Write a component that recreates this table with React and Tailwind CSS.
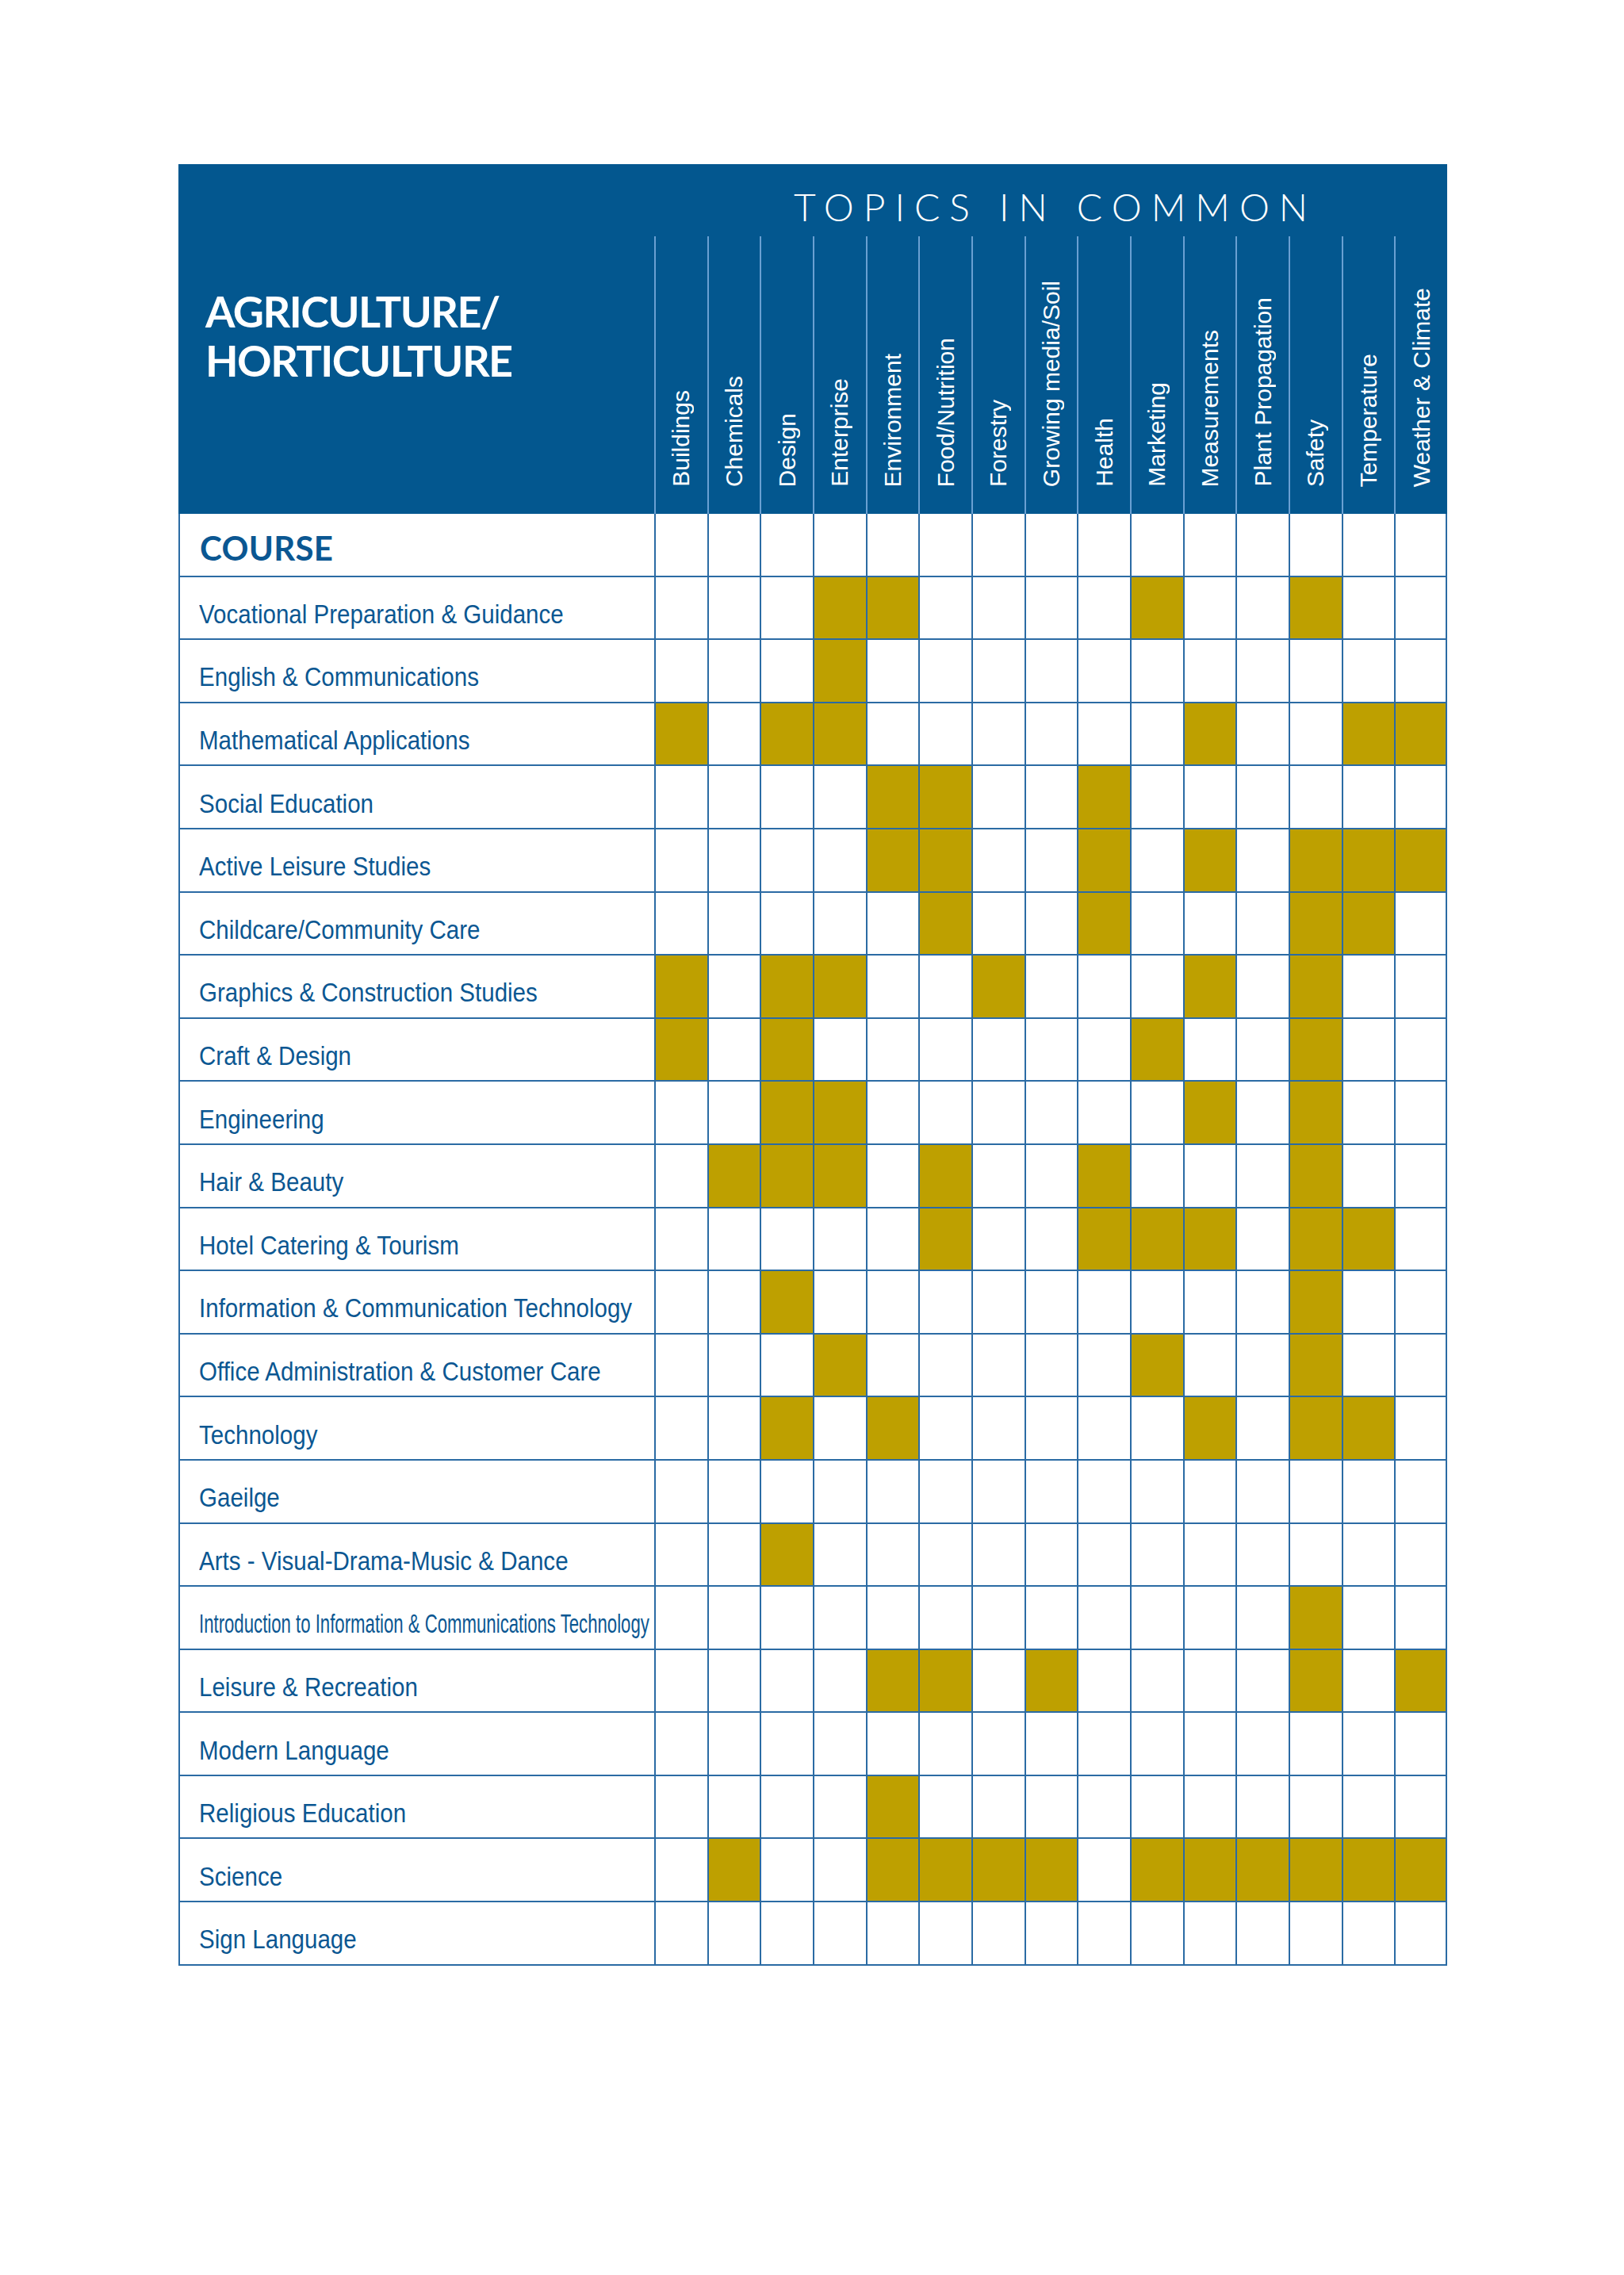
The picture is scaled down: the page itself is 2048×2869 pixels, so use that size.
import React from "react";

const topics = [
  "Buildings",
  "Chemicals",
  "Design",
  "Enterprise",
  "Environment",
  "Food/Nutrition",
  "Forestry",
  "Growing media/Soil",
  "Health",
  "Marketing",
  "Measurements",
  "Plant Propagation",
  "Safety",
  "Temperature",
  "Weather & Climate",
];

const courses = [
  ["Vocational Preparation & Guidance", [3, 4, 9, 12]],
  ["English & Communications", [3]],
  ["Mathematical Applications", [0, 2, 3, 10, 13, 14]],
  ["Social Education", [4, 5, 8]],
  ["Active Leisure Studies", [4, 5, 8, 10, 12, 13, 14]],
  ["Childcare/Community Care", [5, 8, 12, 13]],
  ["Graphics & Construction Studies", [0, 2, 3, 6, 10, 12]],
  ["Craft & Design", [0, 2, 9, 12]],
  ["Engineering", [2, 3, 10, 12]],
  ["Hair & Beauty", [1, 2, 3, 5, 8, 12]],
  ["Hotel Catering & Tourism", [5, 8, 9, 10, 12, 13]],
  ["Information & Communication Technology", [2, 12]],
  ["Office Administration & Customer Care", [3, 9, 12]],
  ["Technology", [2, 4, 10, 12, 13]],
  ["Gaeilge", []],
  ["Arts - Visual-Drama-Music & Dance", [2]],
  ["Introduction to Information & Communications Technology", [12]],
  ["Leisure & Recreation", [4, 5, 7, 12, 14]],
  ["Modern Language", []],
  ["Religious Education", [4]],
  ["Science", [1, 4, 5, 6, 7, 9, 10, 11, 12, 13, 14]],
  ["Sign Language", []],
];

function Cells({ gold }) {
  return topics.map((_, j) => {
    const isGold = gold.includes(j);
    const last = j === topics.length - 1;
    return (
      <div
        key={j}
        className={
          (isGold ? "bg-[#bea000] " : "bg-white ") +
          (last
            ? "w-[66.667px] border-l-2 border-r-2 border-b-2 border-[#2b6ba4]"
            : "w-[66.667px] border-l-2 border-b-2 border-[#2b6ba4]")
        }
      />
    );
  });
}

export default function App() {
  return (
    <div className="w-[2048px] h-[2869px] bg-white font-['Liberation_Sans',Arial,sans-serif]">
      <div className="pt-[207px] pl-[225px]">
        <div className="w-[1600px]">
          {/* Header */}
          <div className="flex h-[441px] bg-[#03578f]">
            <div className="w-[600px] pl-[34px] pt-[155px]">
              <h1 className="font-['Lato',sans-serif] font-bold text-[54px] leading-[62px] text-white tracking-[-1.5px]">
                AGRICULTURE/
                <br />
                HORTICULTURE
              </h1>
            </div>
            <div className="flex w-[1000px] flex-col">
              <div className="h-[91px] pt-[30px] pl-[0.25em] text-center font-['Lato',sans-serif] font-light text-[48px] leading-[48px] tracking-[0.25em] text-white">
                TOPICS IN COMMON
              </div>
              <div className="flex flex-1">
                {topics.map((t) => (
                  <div
                    key={t}
                    className="flex w-[66.667px] items-end justify-center border-l-2 border-[#6aa0d2] pb-[34px]"
                  >
                    <span className="rotate-180 whitespace-nowrap text-[30px] leading-[30px] text-white [writing-mode:vertical-rl]">
                      {t}
                    </span>
                  </div>
                ))}
              </div>
            </div>
          </div>

          {/* COURSE row */}
          <div className="flex h-[79.6px]">
            <div className="flex w-[600px] items-center border-l-2 border-b-2 border-[#2b6ba4] pl-[25px] pt-[9px]">
              <span className="font-['Lato',sans-serif] font-bold text-[42px] leading-none text-[#0b5792] tracking-[0.3px]">
                COURSE
              </span>
            </div>
            <Cells gold={[]} />
          </div>

          {/* Course rows */}
          {courses.map(([name, gold]) => (
            <div key={name} className="flex h-[79.6px]">
              <div className="flex w-[600px] items-center overflow-visible border-l-2 border-b-2 border-[#2b6ba4] pl-[24px] pt-[16px]">
                <span
                  className={
                    name.startsWith("Introduction")
                      ? "origin-left scale-x-[0.672] whitespace-nowrap text-[33px] leading-none text-[#0b5792]"
                      : "origin-left scale-x-[0.895] whitespace-nowrap text-[33px] leading-none text-[#0b5792]"
                  }
                >
                  {name}
                </span>
              </div>
              <Cells gold={gold} />
            </div>
          ))}
        </div>
      </div>
    </div>
  );
}
